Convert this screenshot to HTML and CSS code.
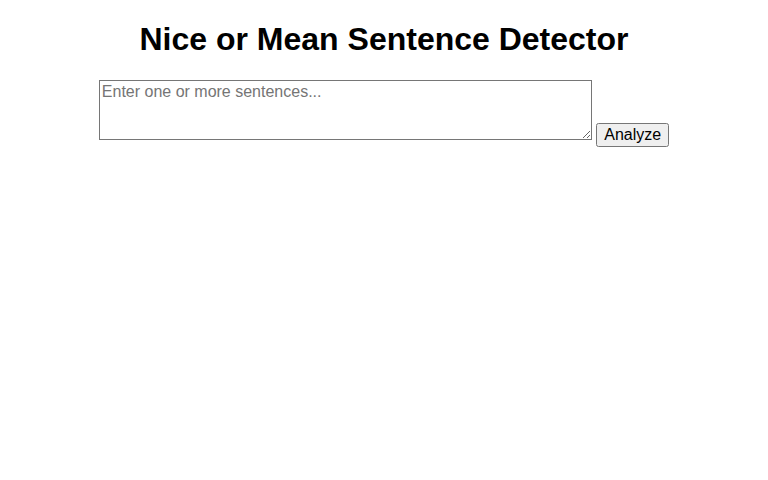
FILE: index.html
```html
<!DOCTYPE html>
<html>
<head>
<meta charset="utf-8">
<link rel="stylesheet" href="styles.css">
</head>
<body>
<div class="app">
  <h1 class="title">Nice or Mean Sentence Detector</h1>
  <div class="form">
    <textarea class="input" placeholder="Enter one or more sentences..."></textarea>
    <button class="btn">Analyze</button>
  </div>
</div>
</body>
</html>
```

FILE: styles.css
```css
body {
  margin: 8px;
  font-family: "Liberation Sans", Arial, sans-serif;
  background: #fff;
  color: #000;
}
.app {
  text-align: center;
}
.title {
  font-size: 32px;
  font-weight: bold;
  margin: 13.44px 0 21.44px;
}
.input {
  width: 493px;
  height: 60px;
  box-sizing: border-box;
  font-family: "Liberation Sans", Arial, sans-serif;
  font-size: 16px;
  padding: 2px;
  border: 1px solid #767676;
  vertical-align: baseline;
}
.btn {
  font-family: "Liberation Sans", Arial, sans-serif;
  font-size: 16px;
}
```
